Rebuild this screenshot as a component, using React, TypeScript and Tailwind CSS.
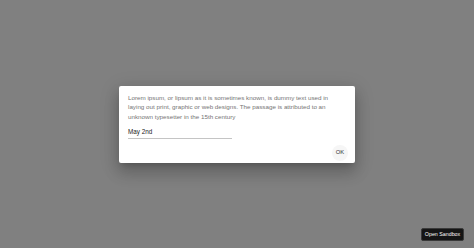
import React from 'react';

export default function App() {
  return (
    <div
      className="relative flex h-[248px] w-[474px] items-center justify-center bg-[#808080]"
      style={{ fontFamily: '"Liberation Sans", Arial, sans-serif' }}
    >
      {/* ===== Dialog ===== */}
      <div className="flex h-[77px] w-[236px] flex-col rounded-[2px] bg-white shadow-[0_4px_6px_-3px_rgba(0,0,0,0.2),0_10px_15px_1px_rgba(0,0,0,0.14),0_4px_18px_3px_rgba(0,0,0,0.12)]">
        <div className="px-[9px] pt-[7px]">
          <p className="whitespace-nowrap text-[6.25px] leading-[9.7px] text-[#757575]">
            Lorem ipsum, or lipsum as it is sometimes known, is dummy text used in
            <br />
            laying out print, graphic or web designs. The passage is attributed to an
            <br />
            unknown typesetter in the 15th century
          </p>

          {/* ===== Date field ===== */}
          <div className="mt-[5px] w-[104px] border-b border-[#c4c4c4] pb-[2px]">
            <span className="block text-[6.3px] leading-[9px] text-[#222]">May 2nd</span>
          </div>
        </div>

        {/* ===== Actions ===== */}
        <div className="mt-auto flex justify-end pb-[2px] pr-[7px]">
          <button className="flex h-[16px] w-[16px] items-center justify-center rounded-full bg-[#f6f6f6] text-[5.8px] text-[#333]">
            OK
          </button>
        </div>
      </div>

      {/* ===== Open Sandbox ===== */}
      <button className="absolute bottom-[7px] right-[10px] flex h-[13px] w-[43px] items-center justify-center rounded-[2px] border border-[#3a3a3a] bg-[#151515] text-[5.3px] text-white">
        Open Sandbox
      </button>
    </div>
  );
}
